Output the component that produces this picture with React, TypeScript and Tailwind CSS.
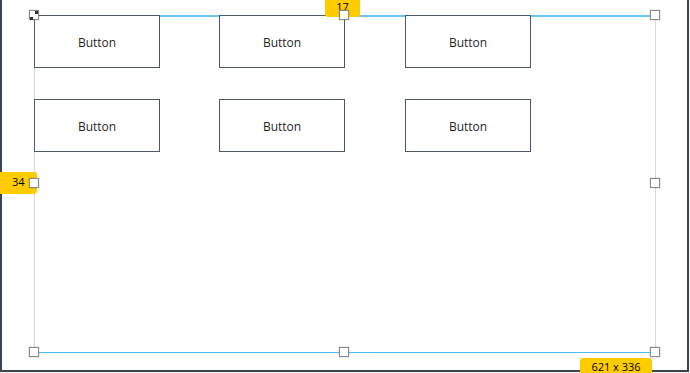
const handles = [
  { x: 34, y: 15 },
  { x: 344, y: 15 },
  { x: 655, y: 15 },
  { x: 34, y: 183 },
  { x: 655, y: 183 },
  { x: 34, y: 352 },
  { x: 344, y: 352 },
  { x: 655, y: 352 },
];

function CanvasButton() {
  return (
    <button className="w-[126px] h-[53px] pt-[3px] border border-[#4d5863] bg-white text-[12px] text-[#1f1f1f] flex items-center justify-center">
      Button
    </button>
  );
}

export default function App() {
  return (
    <div className="w-[690px] h-[373px] bg-[#f4f4f4] overflow-hidden" style={{ fontFamily: '"Open Sans", "Noto Sans", sans-serif' }}>
      <div className="relative w-[689px] h-[372px] bg-white border-l-2 border-r-2 border-b-2 border-[#3a4550]">
        {/* selection frame, under the controls */}
        <div className="absolute left-[32px] top-[15px] w-[622px] h-[338px] border-x border-[#d6d6d6]" />
        <div className="absolute left-[32px] top-[15px] w-[622px] h-[2px] bg-[#6cc6f5]" />
        <div className="absolute left-[32px] top-[352px] w-[622px] h-px bg-[#4fbdf5]" />

        <div className="relative pl-[32px] pt-[15px] grid grid-cols-[185px_186px_126px] gap-y-[31px]">
          <CanvasButton />
          <CanvasButton />
          <CanvasButton />
          <CanvasButton />
          <CanvasButton />
          <CanvasButton />
        </div>

        {/* measurement labels */}
        <div className="absolute left-[323px] top-0 w-[35px] h-[17px] bg-[#ffcc00] rounded-b-[3px] text-[11px] leading-[13px] text-black text-center">
          17
        </div>
        <div className="absolute left-[-2px] top-[172px] w-[37px] h-[22px] bg-[#ffcc00] rounded-r-[3px] text-[11px] leading-[20px] text-black pl-[12px]">
          34
        </div>
        <div className="absolute left-[578px] top-[358px] w-[72px] h-[16px] bg-[#ffcc00] rounded-t-[3px] text-[11px] leading-[18px] text-black text-center">
          621 x 336
        </div>

        {handles.map((h, i) => (
          <div
            key={i}
            className="absolute w-[10px] h-[10px] bg-white border border-[#8a8a8a] shadow-[0_0_1px_rgba(0,0,0,0.4)]"
            style={{ left: h.x - 2 - 5, top: h.y - 5 }}
          />
        ))}
        <div className="absolute left-[33px] top-[11px] w-[3px] h-[3px] bg-[#333]" />
        <div className="absolute left-[28px] top-[17px] w-[3px] h-[3px] bg-[#333]" />
      </div>
    </div>
  );
}
